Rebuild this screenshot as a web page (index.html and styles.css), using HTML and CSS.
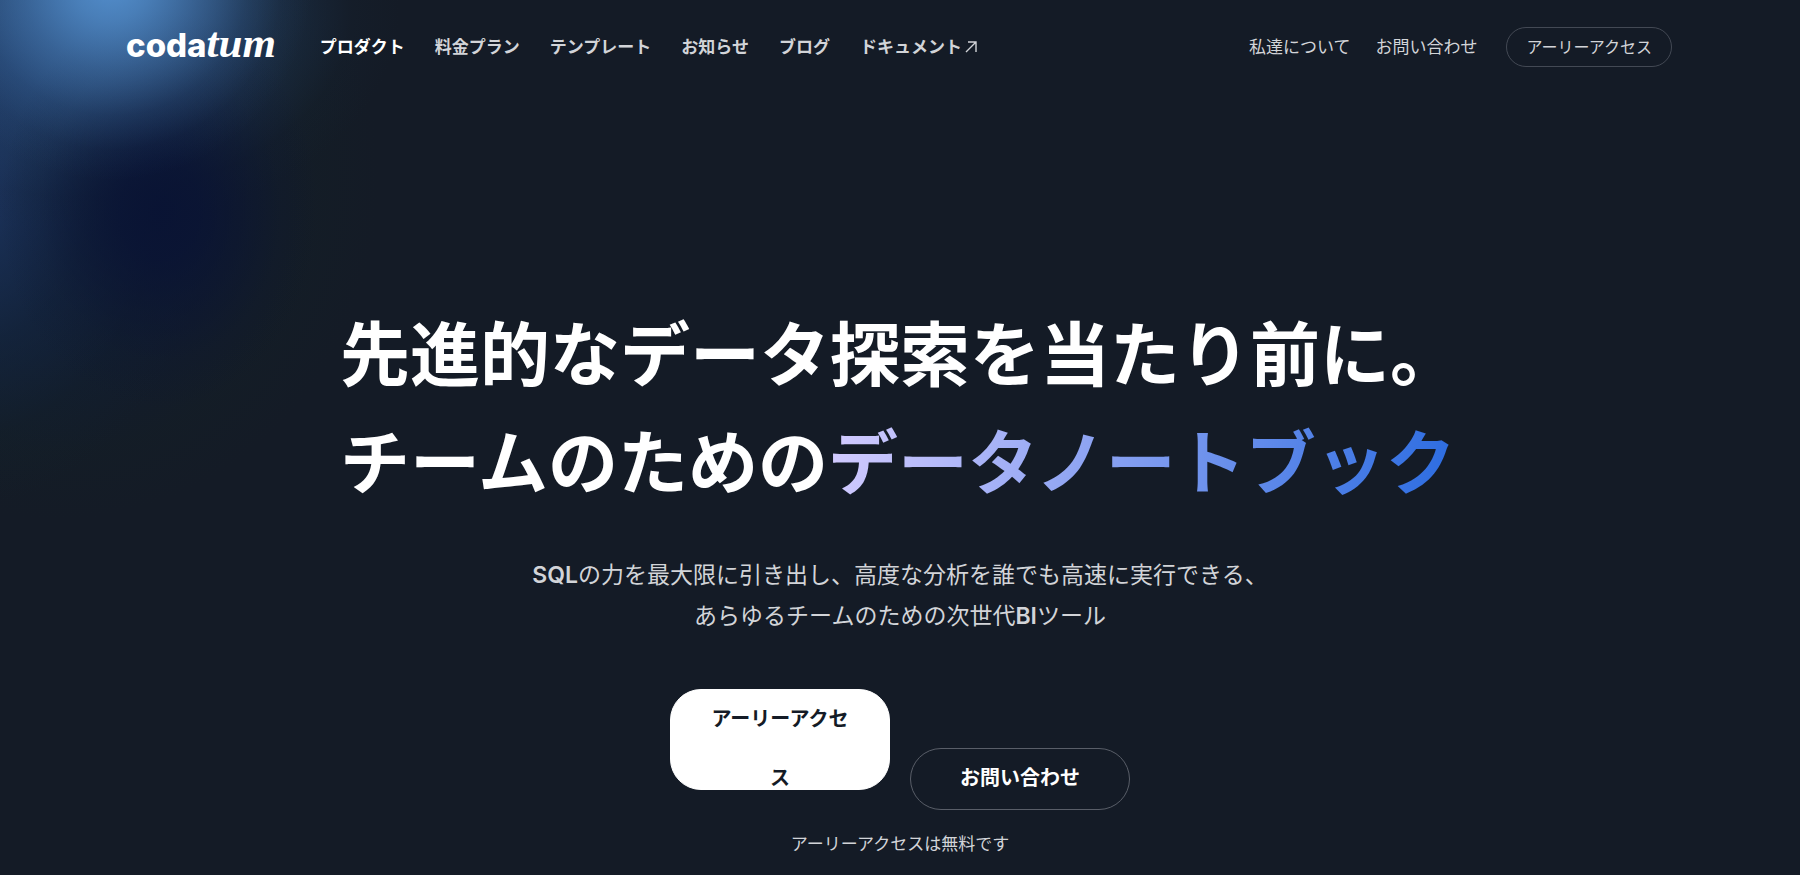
FILE: index.html
```html
<!DOCTYPE html>
<html lang="ja">
<head>
  <meta charset="UTF-8" />
  <meta name="viewport" content="width=device-width,initial-scale=1.0" />
  <title>Codatum</title>
  <link rel="stylesheet" href="styles.css">
</head>
<body>
  <header class="site-header">
    <a href="#" class="logo"><span class="logo-bold">coda</span><span class="logo-script">tum</span></a>

    <nav class="main-nav">
      <a href="#" class="active">プロダクト</a>
      <a href="#">料金プラン</a>
      <a href="#">テンプレート</a>
      <a href="#">お知らせ</a>
      <a href="#">ブログ</a>
      <a href="#" class="external">ドキュメント
        <svg class="arrow" viewBox="0 0 12 12" aria-hidden="true">
          <path d="M1 11 L11 1 M3 1 H11 V11" />
        </svg>
      </a>
    </nav>

    <nav class="sub-nav">
      <a href="#">私達について</a>
      <a href="#">お問い合わせ</a>
      <a href="#" class="btn-small">アーリーアクセス</a>
    </nav>
  </header>

  <main class="hero">
    <h1>先進的なデータ探索を当たり前に。<br>チームのための<span class="gradient-text">データノートブック</span></h1>
    <p class="lead"><span class="latin">SQL</span>の力を最大限に引き出し、高度な分析を誰でも高速に実行できる、<br>あらゆるチームのための次世代<span class="latin">BI</span>ツール</p>
    <div class="actions">
      <a href="#" class="btn btn-primary">アーリーアクセス</a><a href="#" class="btn btn-outline">お問い合わせ</a>
    </div>
    <p class="note">アーリーアクセスは無料です</p>
  </main>
</body>
</html>
```

FILE: styles.css
```css
:root {
  --color-background: #141b26;
  --color-text: #ffffff;
  --color-muted: #d2d4d8;
  --color-border: #434954;
}

* {
  box-sizing: border-box;
}

body {
  margin: 0;
  min-height: 100vh;
  font-family: Inter, "Noto Sans CJK JP", sans-serif;
  color: var(--color-text);
  background-color: var(--color-background);
  background-image:
    radial-gradient(ellipse 200px 200px at 112px -20px, #5490cf 0%, rgba(82, 141, 203, 0.8) 20%, rgba(74, 128, 188, 0.52) 45%, rgba(60, 108, 166, 0.25) 68%, rgba(50, 90, 145, 0.08) 85%, transparent 100%),
    radial-gradient(ellipse 160px 200px at 160px 210px, rgba(9, 19, 52, 0.95) 0%, rgba(9, 19, 52, 0.8) 25%, rgba(10, 20, 50, 0.5) 50%, rgba(12, 22, 46, 0.18) 75%, transparent 100%),
    radial-gradient(ellipse 320px 220px at 80px 10px, rgba(48, 88, 140, 0.7) 0%, rgba(42, 78, 126, 0.58) 35%, rgba(34, 64, 100, 0.35) 65%, rgba(24, 44, 64, 0.12) 85%, transparent 100%),
    radial-gradient(ellipse 270px 350px at -50px 160px, rgba(34, 60, 112, 0.9) 0%, rgba(28, 54, 94, 0.68) 30%, rgba(22, 46, 76, 0.42) 55%, rgba(18, 38, 52, 0.18) 80%, transparent 100%),
    radial-gradient(ellipse 320px 340px at 60px 180px, rgba(12, 24, 62, 0.7) 0%, rgba(14, 28, 56, 0.45) 50%, rgba(18, 34, 40, 0.2) 80%, transparent 100%);
  background-repeat: no-repeat;
}

a {
  color: inherit;
  text-decoration: none;
}

.site-header {
  display: flex;
  align-items: center;
  height: 94px;
  padding: 0 128px 0 126px;
}

.logo {
  display: flex;
  align-items: baseline;
  line-height: 40px;
  margin-right: 44px;
  padding-bottom: 6px;
}

.logo-bold {
  font-size: 33px;
  font-weight: 800;
}

.logo-script {
  font-family: "Liberation Serif", serif;
  font-size: 43px;
  font-style: italic;
  font-weight: 700;
}

.main-nav,
.sub-nav {
  display: flex;
  align-items: center;
  font-size: 17px;
  line-height: 24px;
  color: var(--color-muted);
  white-space: nowrap;
}

.main-nav {
  gap: 30px;
  font-weight: 700;
}

.main-nav .active {
  color: var(--color-text);
}

.external {
  display: flex;
  align-items: center;
  gap: 3px;
}

.arrow {
  width: 12px;
  height: 12px;
  fill: none;
  stroke: currentColor;
  stroke-width: 1.4;
}

.sub-nav {
  gap: 25px;
  margin-left: auto;
}

.btn-small {
  margin-left: 4px;
  padding: 7px 19px;
  border: 1px solid var(--color-border);
  border-radius: 21px;
  font-size: 16px;
}

.hero {
  padding-top: 208px;
  text-align: center;
}

h1 {
  display: inline-block;
  margin: 0 0 37px;
  font-size: 70px;
  font-weight: 700;
  line-height: 108px;
  text-align: left;
}

.gradient-text {
  background: linear-gradient(100deg, #d4ccff 0%, #2a6be0 100%);
  background-clip: text;
  -webkit-background-clip: text;
  color: transparent;
}

.lead {
  margin: 0 0 52px;
  font-size: 23px;
  line-height: 41px;
  color: var(--color-muted);
}

.latin {
  font-weight: 600;
}

/* both buttons share the baseline of their last line */
.btn {
  display: inline-block;
  width: 220px;
  padding: 0 38px;
  border: 1px solid #595e68;
  border-radius: 31px;
  font-size: 20px;
  font-weight: 700;
  line-height: 59px;
}

.btn-primary {
  height: 101px;
  margin-right: 20px;
  border-color: #ffffff;
  background: #ffffff;
  color: var(--color-background);
}

.btn-outline {
  height: 62px;
}

.note {
  margin: 21px 0 0;
  font-size: 17px;
  line-height: 26px;
  color: var(--color-muted);
}
```
